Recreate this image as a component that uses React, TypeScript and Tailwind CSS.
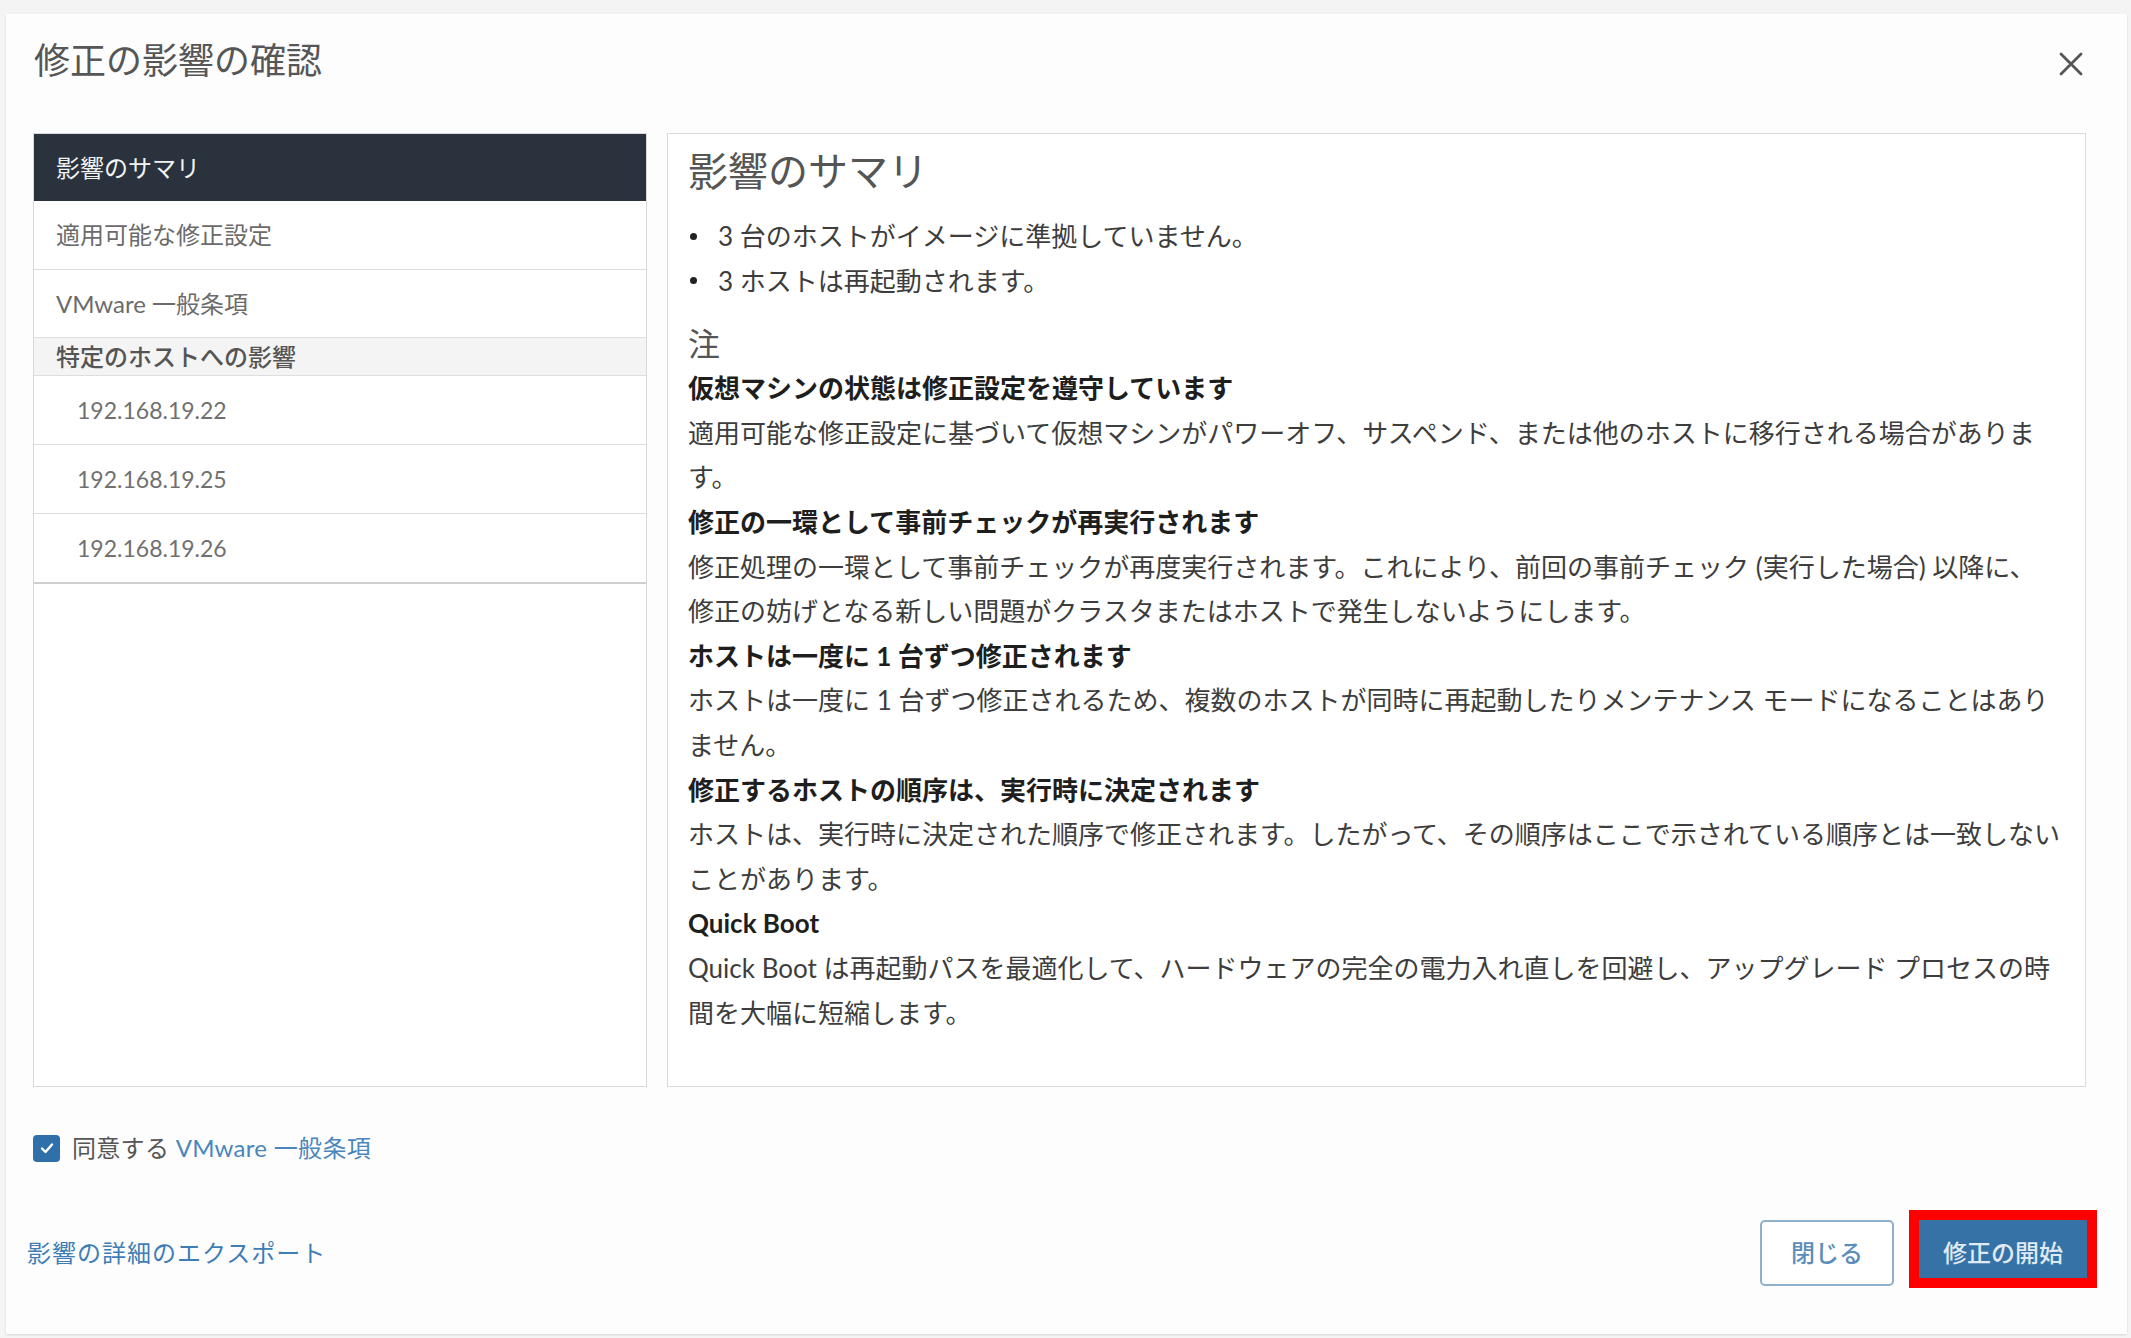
import { Fragment } from "react";

const hosts = ["192.168.19.22", "192.168.19.25", "192.168.19.26"];

const notes = [
  {
    title: "仮想マシンの状態は修正設定を遵守しています",
    lines: [
      "適用可能な修正設定に基づいて仮想マシンがパワーオフ、サスペンド、または他のホストに移行される場合がありま",
      "す。",
    ],
  },
  {
    title: "修正の一環として事前チェックが再実行されます",
    lines: [
      "修正処理の一環として事前チェックが再度実行されます。これにより、前回の事前チェック (実行した場合) 以降に、",
      "修正の妨げとなる新しい問題がクラスタまたはホストで発生しないようにします。",
    ],
  },
  {
    title: "ホストは一度に 1 台ずつ修正されます",
    lines: [
      "ホストは一度に 1 台ずつ修正されるため、複数のホストが同時に再起動したりメンテナンス モードになることはあり",
      "ません。",
    ],
  },
  {
    title: "修正するホストの順序は、実行時に決定されます",
    lines: [
      "ホストは、実行時に決定された順序で修正されます。したがって、その順序はここで示されている順序とは一致しない",
      "ことがあります。",
    ],
  },
  {
    title: "Quick Boot",
    lines: [
      "Quick Boot は再起動パスを最適化して、ハードウェアの完全の電力入れ直しを回避し、アップグレード プロセスの時",
      "間を大幅に短縮します。",
    ],
  },
];

function CloseIcon() {
  return (
    <svg width="26" height="26" viewBox="0 0 26 26" fill="none">
      <path d="M3 3L23 23M23 3L3 23" stroke="#555" strokeWidth="2.8" strokeLinecap="round" />
    </svg>
  );
}

function Sidebar() {
  return (
    <div className="w-[614px] shrink-0 border border-[#d9d9d9] bg-white text-[24px]">
      <div className="h-[67px] bg-[#29323d] text-[#f2f2f2] flex items-center pl-[22px]">
        影響のサマリ
      </div>
      <div className="h-[69px] border-b border-[#dedede] flex items-center pl-[22px] text-[#6b6b6b]">
        適用可能な修正設定
      </div>
      <div className="h-[68px] border-b border-[#dedede] flex items-center pl-[22px] text-[#6b6b6b]">
        VMware 一般条項
      </div>
      <div className="h-[38px] border-b border-[#dedede] bg-[#f4f4f4] flex items-center pl-[22px] text-[#555] font-medium">
        特定のホストへの影響
      </div>
      {hosts.map((ip, i) => (
        <div
          key={ip}
          className={
            i === hosts.length - 1
              ? "h-[70px] border-b-2 border-[#cfcfcf] flex items-center pl-[43px] text-[23px] text-[#707070]"
              : "h-[69px] border-b border-[#dedede] flex items-center pl-[43px] text-[23px] text-[#707070]"
          }
        >
          {ip}
        </div>
      ))}
    </div>
  );
}

function Summary() {
  return (
    <div className="flex-1 border border-[#dadada] bg-white pl-[20px] pt-[13px] whitespace-nowrap">
      <h2 className="text-[40px] leading-[48px] text-[#555]">影響のサマリ</h2>

      <ul className="mt-[19px] text-[26px] leading-[44.6px] text-[#3d3d3d]">
        <li className="flex items-center">
          <span className="w-[7px] h-[7px] rounded-full bg-[#222] ml-[2px] mr-[21px]" />3 台のホストがイメージに準拠していません。
        </li>
        <li className="flex items-center">
          <span className="w-[7px] h-[7px] rounded-full bg-[#222] ml-[2px] mr-[21px]" />3 ホストは再起動されます。
        </li>
      </ul>

      <h3 className="mt-[19px] text-[32px] leading-[44px] text-[#555]">注</h3>

      <div className="text-[26px] leading-[44.6px]">
        {notes.map((note) => (
          <Fragment key={note.title}>
            <p className="font-bold text-[#1e1e1e]">{note.title}</p>
            <p className="text-[#3d3d3d]">
              {note.lines.map((line, i) => (
                <Fragment key={i}>
                  {i > 0 && <br />}
                  {line}
                </Fragment>
              ))}
            </p>
          </Fragment>
        ))}
      </div>
    </div>
  );
}

export default function App() {
  return (
    <div className="min-h-screen bg-[#f4f4f5] pt-[14px] pl-[6px] font-[Lato,'Noto_Sans_CJK_JP',sans-serif]">
      <div className="w-[2121px] h-[1320px] bg-[#fdfdfd] shadow-[0_1px_2px_rgba(0,0,0,0.12)] pl-[27px] pr-[41px] flex flex-col">
        <div className="h-[119px] pt-[22px] flex items-start justify-between">
          <h1 className="pl-[1px] text-[36px] leading-[48px] text-[#565656]">修正の影響の確認</h1>
          <button className="mt-[15px] mr-[2px]">
            <CloseIcon />
          </button>
        </div>

        <div className="h-[954px] flex gap-[20px]">
          <Sidebar />
          <Summary />
        </div>

        <div className="mt-[41px] h-[40px] flex items-center gap-[12px] text-[24px]">
          <span className="w-[27px] h-[27px] rounded-[4px] bg-[#2f70ab] flex items-center justify-center">
            <svg width="16" height="16" viewBox="0 0 16 16" fill="none">
              <path d="M3 8.5L6.5 12L13 4.5" stroke="#fff" strokeWidth="2.4" strokeLinecap="round" strokeLinejoin="round" />
            </svg>
          </span>
          <span className="text-[#555] tracking-[0.3px]">
            同意する <a className="text-[#4a86bb]">VMware 一般条項</a>
          </span>
        </div>

        <div className="mt-[52px] h-[66px] flex items-center justify-between">
          <a className="-ml-[6px] text-[24px] text-[#3f7db5] tracking-[1px]">影響の詳細のエクスポート</a>
          <div className="flex items-center gap-[25px] -mr-[1px]">
            <button className="w-[134px] h-[66px] rounded-[5px] border-2 border-[#8eb0cc] bg-white text-[24px] font-medium text-[#5b8dba]">
              閉じる
            </button>
            <div className="relative">
              <button className="w-[168px] h-[66px] bg-[#3672a5] text-[24px] font-medium text-[#dfeaf4]">
                修正の開始
              </button>
              <span className="absolute -left-[10px] -top-[10px] w-[188px] h-[78px] border-[10px] border-[#ff0000] pointer-events-none" />
            </div>
          </div>
        </div>
      </div>
    </div>
  );
}
